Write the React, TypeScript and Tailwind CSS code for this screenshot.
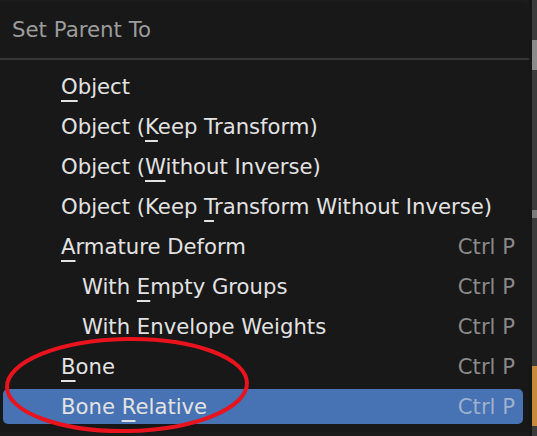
import { FC } from "react";

type MenuItem = {
  before: string;
  key: string;
  after: string;
  shortcut?: string;
  sub?: boolean;
  active?: boolean;
};

const items: MenuItem[] = [
  { before: "", key: "O", after: "bject" },
  { before: "Object (", key: "K", after: "eep Transform)" },
  { before: "Object (", key: "W", after: "ithout Inverse)" },
  { before: "Object (Keep ", key: "T", after: "ransform Without Inverse)" },
  { before: "", key: "A", after: "rmature Deform", shortcut: "Ctrl P" },
  { before: "With ", key: "E", after: "mpty Groups", shortcut: "Ctrl P", sub: true },
  { before: "With En", key: "v", after: "elope Weights", shortcut: "Ctrl P", sub: true },
  { before: "", key: "B", after: "one", shortcut: "Ctrl P" },
  { before: "Bone ", key: "R", after: "elative", shortcut: "Ctrl P", active: true },
];

const App: FC = () => {
  return (
    <div
      className="relative w-[537px] h-[436px] overflow-hidden bg-[#1b1b1b] flex"
      style={{ fontFamily: '"DejaVu Sans", sans-serif' }}
    >
      <div className="w-[529px] h-[430px] mt-[2px] bg-[#181818] rounded-tr-[8px] flex flex-col">
        <div className="h-[56px] flex items-center pl-[12px] text-[21.3px] text-[#9c9c9c]">
          Set Parent To
        </div>
        <div className="h-[2px] bg-[#363636]" />
        <div className="pt-[6px] flex flex-col">
          {items.map((item, i) => (
            <div key={i} className="h-[40px] pl-[3px] pr-[6px] pt-[3px] pb-[2px]">
              <div
                className={
                  "h-full flex items-center justify-between rounded-[5px] pr-[8px] text-[21.2px] " +
                  (item.sub ? "pl-[79px] " : "pl-[58px] ") +
                  (item.active ? "bg-[#4772b3]" : "")
                }
              >
                <span className="text-[#e2e2e2] whitespace-nowrap">
                  {item.before}
                  <span className="underline decoration-[1.5px] underline-offset-[6px]">{item.key}</span>
                  {item.after}
                </span>
                {item.shortcut && (
                  <span className={item.active ? "text-[#9db0cf]" : "text-[#8a8a8a]"}>
                    {item.shortcut}
                  </span>
                )}
              </div>
            </div>
          ))}
        </div>
      </div>
      <div className="w-[3px] bg-[#161616]" />
      <div className="flex-1 flex flex-col bg-[#3b3b3b]">
        <div className="h-[40px]" />
        <div className="h-[30px] bg-[#8a8a8a]" />
        <div className="h-[140px]" />
        <div className="h-[8px] bg-[#7a7a7a]" />
        <div className="flex-1" />
        <div className="h-[60px] bg-[#c88a3a]" />
        <div className="h-[10px]" />
      </div>
      <svg
        className="absolute left-0 top-0 pointer-events-none"
        width="537"
        height="436"
        viewBox="0 0 537 436"
      >
        <ellipse
          cx="127"
          cy="385"
          rx="120"
          ry="46"
          fill="none"
          stroke="#e8131d"
          strokeWidth="4"
          transform="rotate(-1 127 385)"
        />
      </svg>
    </div>
  );
};

export default App;
